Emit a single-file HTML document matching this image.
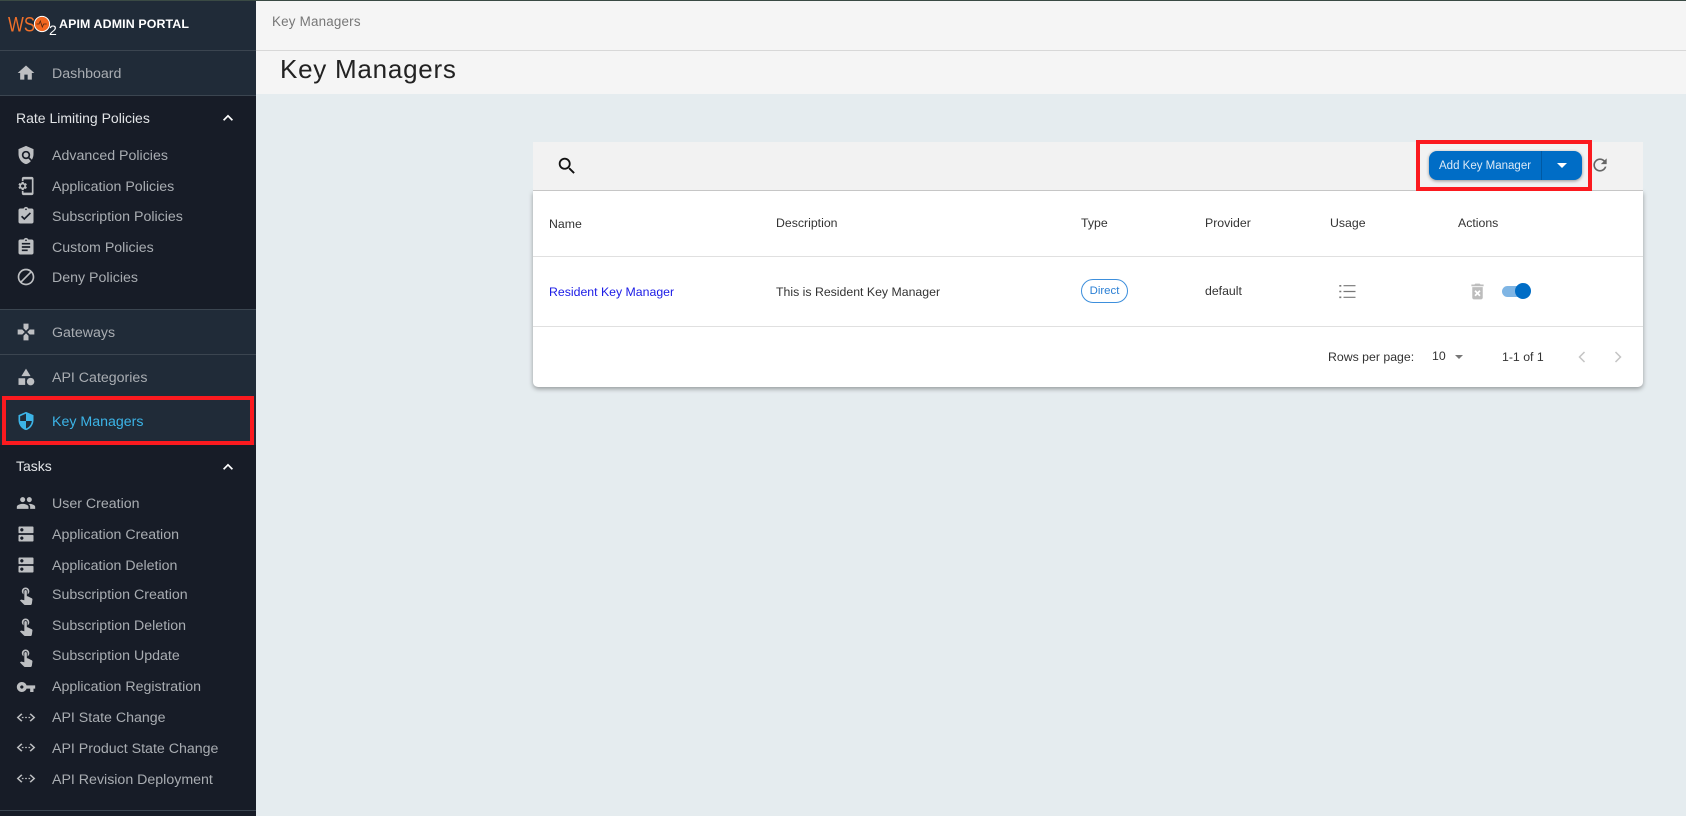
<!DOCTYPE html>
<html><head><meta charset="utf-8"><title>Key Managers</title>
<style>
html,body{margin:0;padding:0;width:1686px;height:816px;overflow:hidden;background:#e5ecef;font-family:"Liberation Sans",sans-serif;}
.a{position:absolute;}
.t{position:absolute;white-space:nowrap;line-height:20px;height:20px;}
.s{position:absolute;left:52px;white-space:nowrap;line-height:20px;height:20px;font-size:14.2px;color:#a9adb2;}
.h{position:absolute;left:16px;white-space:nowrap;line-height:20px;height:20px;font-size:14px;color:#e2e4e7;}
svg.i{position:absolute;left:16px;width:20px;height:20px;fill:#bdbfc2;}
svg.e{position:absolute;left:16px;width:20px;height:15px;fill:#bdbfc2;}
.c{position:absolute;white-space:nowrap;line-height:20px;height:20px;font-size:12.3px;color:#333;}
</style></head><body>
<div class="a" style="left:0;top:0;width:1686px;height:1px;background:#3a4a44"></div>
<div class="a" style="left:0;top:1px;width:256px;height:815px;background:#171c27"></div>
<div class="a" style="left:0;top:1px;width:256px;height:95px;background:#202b38"></div>
<div class="a" style="left:0;top:50px;width:256px;height:1px;background:#3b4550"></div>
<div class="a" style="left:0;top:95px;width:256px;height:1px;background:#3b4550"></div>
<div class="a" style="left:0;top:309px;width:256px;height:88px;background:#202b38"></div>
<div class="a" style="left:0;top:309px;width:256px;height:1px;background:#3b4550"></div>
<div class="a" style="left:0;top:354px;width:256px;height:1px;background:#3b4550"></div>
<div class="a" style="left:0;top:397px;width:256px;height:48px;background:#202b38"></div>
<div class="a" style="left:0;top:810px;width:256px;height:1px;background:#3b4550"></div>

<svg class="a" style="left:6px;top:8px" width="56" height="32" viewBox="0 0 56 32">
<text x="2" y="23.5" font-family="Liberation Sans" font-size="21" fill="#f0702a" textLength="27" lengthAdjust="spacingAndGlyphs">WS</text>
<circle cx="36" cy="16" r="7.6" fill="#f2661f" stroke="#fff" stroke-width="1"/>
<path d="M30.5 16h2.5l1.3-3 2 6 1.4-3h3" fill="none" stroke="#4a2512" stroke-width=".8"/>
<text x="43" y="27" font-family="Liberation Sans" font-size="14" fill="#fff">2</text>
</svg>
<div class="t" style="left:59px;top:14px;font-size:12.4px;font-weight:bold;color:#fff;letter-spacing:.12px">APIM ADMIN PORTAL</div>

<svg class="i" style="top:63px" viewBox="0 0 24 24"><path d="M10 20v-6h4v6h5v-8h3L12 3 2 12h3v8z"/></svg>
<div class="s" style="top:64px">Dashboard</div>

<div class="h" style="top:108px">Rate Limiting Policies</div>
<svg class="a" style="left:218px;top:108px;fill:#fff" width="20" height="20" viewBox="0 0 24 24"><path d="M7.41 15.41L12 10.83l4.59 4.58L18 14l-6-6-6 6z"/></svg>

<svg class="i" style="top:145px" viewBox="0 0 24 24"><path d="M21 5l-9-4-9 4v6c0 5.55 3.84 10.74 9 12 2.3-.56 4.33-1.9 5.88-3.71l-3.12-3.12c-1.94 1.29-4.58 1.07-6.29-.64-1.95-1.95-1.95-5.12 0-7.07 1.95-1.95 5.12-1.95 7.07 0 1.71 1.71 1.92 4.35.64 6.29l2.9 2.9C20.29 15.69 21 13.38 21 11V5z"/><circle cx="12" cy="12" r="3"/></svg>
<div class="s" style="top:146px">Advanced Policies</div>
<svg class="i" style="top:176px" viewBox="0 0 24 24"><path d="M11.8 12.5v-1l1.1-.8c.1-.1.1-.2.1-.3l-1-1.7c-.1-.1-.2-.2-.3-.1l-1.3.4c-.3-.2-.6-.4-.9-.5l-.2-1.3c0-.1-.1-.2-.3-.2H7c-.1 0-.2.1-.3.2l-.2 1.3c-.3.1-.6.3-.9.5l-1.3-.5c-.1 0-.2 0-.3.1l-1 1.7c-.1.1 0 .2.1.3l1.1.8v1l-1.1.8c-.1.2-.1.3-.1.4l1 1.7c.1.1.2.2.3.1l1.4-.4c.3.2.6.4.9.5l.2 1.3c-.1.1.1.2.2.2h2c.1 0 .2-.1.3-.2l.2-1.3c.3-.1.6-.3.9-.5l1.3.5c.1 0 .2 0 .3-.1l1-1.7c.1-.1 0-.2-.1-.3l-1.1-.9zM8 14c-1.1 0-2-.9-2-2s.9-2 2-2 2 .9 2 2-.9 2-2 2zM19 1H9c-1.1 0-2 .9-2 2v3h2V4h10v16H9v-2H7v3c0 1.1.9 2 2 2h10c1.1 0 2-.9 2-2V3c0-1.1-.9-2-2-2z"/></svg>
<div class="s" style="top:177px">Application Policies</div>
<svg class="i" style="top:206px" viewBox="0 0 24 24"><path d="M19 3h-4.18C14.4 1.84 13.3 1 12 1c-1.3 0-2.4.84-2.82 2H5c-1.1 0-2 .9-2 2v14c0 1.1.9 2 2 2h14c1.1 0 2-.9 2-2V5c0-1.1-.9-2-2-2zm-7 0c.55 0 1 .45 1 1s-.45 1-1 1-1-.45-1-1 .45-1 1-1zm-2 14l-4-4 1.41-1.41L10 14.17l6.59-6.59L18 9l-8 8z"/></svg>
<div class="s" style="top:207px">Subscription Policies</div>
<svg class="i" style="top:237px" viewBox="0 0 24 24"><path d="M19 3h-4.18C14.4 1.84 13.3 1 12 1c-1.3 0-2.4.84-2.82 2H5c-1.1 0-2 .9-2 2v14c0 1.1.9 2 2 2h14c1.1 0 2-.9 2-2V5c0-1.1-.9-2-2-2zm-7 0c.55 0 1 .45 1 1s-.45 1-1 1-1-.45-1-1 .45-1 1-1zm2 14H7v-2h7v2zm3-4H7v-2h10v2zm0-4H7V7h10v2z"/></svg>
<div class="s" style="top:238px">Custom Policies</div>
<svg class="i" style="top:267px" viewBox="0 0 24 24"><path d="M12 2C6.48 2 2 6.48 2 12s4.48 10 10 10 10-4.48 10-10S17.52 2 12 2zM4 12c0-4.42 3.58-8 8-8 1.85 0 3.55.63 4.9 1.69L5.69 16.9C4.63 15.55 4 13.85 4 12zm8 8c-1.85 0-3.55-.63-4.9-1.69L18.31 7.1C19.37 8.45 20 10.15 20 12c0 4.42-3.58 8-8 8z"/></svg>
<div class="s" style="top:268px">Deny Policies</div>

<svg class="i" style="top:322px" viewBox="0 0 24 24"><path d="M15 7.5V2H9v5.5l3 3 3-3zM7.5 9H2v6h5.5l3-3-3-3zM9 16.5V22h6v-5.5l-3-3-3 3zM16.5 9l-3 3 3 3H22V9h-5.5z"/></svg>
<div class="s" style="top:323px">Gateways</div>
<svg class="i" style="top:367px" viewBox="0 0 24 24"><path d="M12 2l-5.5 9h11z"/><circle cx="17.5" cy="17.5" r="4.5"/><path d="M3 13.5h8v8H3z"/></svg>
<div class="s" style="top:368px">API Categories</div>
<svg class="i" style="top:411px;fill:#3cb4e7" viewBox="0 0 24 24"><path d="M12 1L3 5v6c0 5.55 3.84 10.74 9 12 5.16-1.26 9-6.45 9-12V5l-9-4zm0 10.99h7c-.53 4.12-3.28 7.79-7 8.94V12H5V6.3l7-3.11v8.8z"/></svg>
<div class="s" style="top:412px;color:#3cb4e7">Key Managers</div>
<div class="a" style="left:2px;top:396px;width:252px;height:49px;border:4px solid #fb1a1f;box-sizing:border-box"></div>

<div class="h" style="top:456px">Tasks</div>
<svg class="a" style="left:218px;top:457px;fill:#fff" width="20" height="20" viewBox="0 0 24 24"><path d="M7.41 15.41L12 10.83l4.59 4.58L18 14l-6-6-6 6z"/></svg>

<svg class="i" style="top:493px" viewBox="0 0 24 24"><path d="M16 11c1.66 0 2.99-1.34 2.99-3S17.66 5 16 5c-1.66 0-3 1.34-3 3s1.34 3 3 3zm-8 0c1.66 0 2.99-1.34 2.99-3S9.66 5 8 5C6.34 5 5 6.34 5 8s1.34 3 3 3zm0 2c-2.33 0-7 1.17-7 3.5V19h14v-2.5c0-2.33-4.67-3.5-7-3.5zm8 0c-.29 0-.62.02-.97.05 1.16.84 1.97 1.97 1.97 3.45V19h6v-2.5c0-2.33-4.67-3.5-7-3.5z"/></svg>
<div class="s" style="top:494px">User Creation</div>
<svg class="i" style="top:524px" viewBox="0 0 24 24"><path d="M20 13H4c-.55 0-1 .45-1 1v6c0 .55.45 1 1 1h16c.55 0 1-.45 1-1v-6c0-.55-.45-1-1-1zM7 19c-1.1 0-2-.9-2-2s.9-2 2-2 2 .9 2 2-.9 2-2 2zM20 3H4c-.55 0-1 .45-1 1v6c0 .55.45 1 1 1h16c.55 0 1-.45 1-1V4c0-.55-.45-1-1-1zM7 9c-1.1 0-2-.9-2-2s.9-2 2-2 2 .9 2 2-.9 2-2 2z"/></svg>
<div class="s" style="top:525px">Application Creation</div>
<svg class="i" style="top:555px" viewBox="0 0 24 24"><path d="M20 13H4c-.55 0-1 .45-1 1v6c0 .55.45 1 1 1h16c.55 0 1-.45 1-1v-6c0-.55-.45-1-1-1zM7 19c-1.1 0-2-.9-2-2s.9-2 2-2 2 .9 2 2-.9 2-2 2zM20 3H4c-.55 0-1 .45-1 1v6c0 .55.45 1 1 1h16c.55 0 1-.45 1-1V4c0-.55-.45-1-1-1zM7 9c-1.1 0-2-.9-2-2s.9-2 2-2 2 .9 2 2-.9 2-2 2z"/></svg>
<div class="s" style="top:556px">Application Deletion</div>
<svg class="i" style="top:585px" viewBox="0 0 24 24"><path d="M9 11.24V7.5C9 6.12 10.12 5 11.5 5S14 6.12 14 7.5v3.74c1.21-.81 2-2.18 2-3.74C16 5.01 13.99 3 11.5 3S7 5.01 7 7.5c0 1.56.79 2.93 2 3.74zm9.84 4.63l-4.54-2.26c-.17-.07-.35-.11-.54-.11H13v-6c0-.83-.67-1.5-1.5-1.5S10 6.67 10 7.5v10.74l-3.43-.72c-.08-.01-.15-.03-.24-.03-.31 0-.59.13-.79.33l-.79.8 4.94 4.94c.27.27.65.44 1.06.44h6.79c.75 0 1.33-.55 1.44-1.28l.75-5.27c.01-.07.02-.14.02-.2 0-.62-.38-1.16-.91-1.38z"/></svg>
<div class="s" style="top:585px">Subscription Creation</div>
<svg class="i" style="top:616px" viewBox="0 0 24 24"><path d="M9 11.24V7.5C9 6.12 10.12 5 11.5 5S14 6.12 14 7.5v3.74c1.21-.81 2-2.18 2-3.74C16 5.01 13.99 3 11.5 3S7 5.01 7 7.5c0 1.56.79 2.93 2 3.74zm9.84 4.63l-4.54-2.26c-.17-.07-.35-.11-.54-.11H13v-6c0-.83-.67-1.5-1.5-1.5S10 6.67 10 7.5v10.74l-3.43-.72c-.08-.01-.15-.03-.24-.03-.31 0-.59.13-.79.33l-.79.8 4.94 4.94c.27.27.65.44 1.06.44h6.79c.75 0 1.33-.55 1.44-1.28l.75-5.27c.01-.07.02-.14.02-.2 0-.62-.38-1.16-.91-1.38z"/></svg>
<div class="s" style="top:616px">Subscription Deletion</div>
<svg class="i" style="top:647px" viewBox="0 0 24 24"><path d="M9 11.24V7.5C9 6.12 10.12 5 11.5 5S14 6.12 14 7.5v3.74c1.21-.81 2-2.18 2-3.74C16 5.01 13.99 3 11.5 3S7 5.01 7 7.5c0 1.56.79 2.93 2 3.74zm9.84 4.63l-4.54-2.26c-.17-.07-.35-.11-.54-.11H13v-6c0-.83-.67-1.5-1.5-1.5S10 6.67 10 7.5v10.74l-3.43-.72c-.08-.01-.15-.03-.24-.03-.31 0-.59.13-.79.33l-.79.8 4.94 4.94c.27.27.65.44 1.06.44h6.79c.75 0 1.33-.55 1.44-1.28l.75-5.27c.01-.07.02-.14.02-.2 0-.62-.38-1.16-.91-1.38z"/></svg>
<div class="s" style="top:646px">Subscription Update</div>
<svg class="i" style="top:677px" viewBox="0 0 24 24"><path d="M12.65 10C11.83 7.67 9.61 6 7 6c-3.31 0-6 2.69-6 6s2.69 6 6 6c2.61 0 4.83-1.67 5.65-4H17v4h4v-4h2v-4H12.65zM7 14c-1.1 0-2-.9-2-2s.9-2 2-2 2 .9 2 2-.9 2-2 2z"/></svg>
<div class="s" style="top:677px">Application Registration</div>
<svg class="e" style="top:710px" viewBox="0 0 24 24" preserveAspectRatio="none"><path d="M7.77 6.76L6.23 5.48.82 12l5.41 6.52 1.54-1.28L3.42 12l4.35-5.24zM7 13h2v-2H7v2zm10-2h-2v2h2v-2zm-6 2h2v-2h-2v2zm6.77-7.52l-1.54 1.28L20.58 12l-4.35 5.24 1.54 1.28L23.18 12l-5.41-6.52z"/></svg>
<div class="s" style="top:708px">API State Change</div>
<svg class="e" style="top:740px" viewBox="0 0 24 24" preserveAspectRatio="none"><path d="M7.77 6.76L6.23 5.48.82 12l5.41 6.52 1.54-1.28L3.42 12l4.35-5.24zM7 13h2v-2H7v2zm10-2h-2v2h2v-2zm-6 2h2v-2h-2v2zm6.77-7.52l-1.54 1.28L20.58 12l-4.35 5.24 1.54 1.28L23.18 12l-5.41-6.52z"/></svg>
<div class="s" style="top:739px">API Product State Change</div>
<svg class="e" style="top:771px" viewBox="0 0 24 24" preserveAspectRatio="none"><path d="M7.77 6.76L6.23 5.48.82 12l5.41 6.52 1.54-1.28L3.42 12l4.35-5.24zM7 13h2v-2H7v2zm10-2h-2v2h2v-2zm-6 2h2v-2h-2v2zm6.77-7.52l-1.54 1.28L20.58 12l-4.35 5.24 1.54 1.28L23.18 12l-5.41-6.52z"/></svg>
<div class="s" style="top:770px">API Revision Deployment</div>

<div class="a" style="left:256px;top:1px;width:1430px;height:93px;background:#f5f5f5"></div>
<div class="a" style="left:256px;top:50px;width:1430px;height:1px;background:#d8d8d8"></div>
<div class="t" style="left:272px;top:12px;font-size:13.4px;color:#777;letter-spacing:.2px">Key Managers</div>
<div class="t" style="left:280px;top:54px;height:30px;line-height:30px;font-size:26px;color:#222;letter-spacing:.75px">Key Managers</div>

<div class="a" style="left:533px;top:191px;width:1110px;height:196px;background:#fff;border-radius:0 0 5px 5px;box-shadow:0 2px 5px rgba(0,0,0,.35)"></div>
<div class="a" style="left:533px;top:142px;width:1110px;height:48px;background:#f2f2f2"></div>
<div class="a" style="left:533px;top:190px;width:1110px;height:1px;background:#c6c6c6"></div>
<div class="a" style="left:533px;top:256px;width:1110px;height:1px;background:#e0e0e0"></div>
<div class="a" style="left:533px;top:326px;width:1110px;height:1px;background:#e0e0e0"></div>

<svg class="a" style="left:556px;top:155px;fill:#111" width="22" height="22" viewBox="0 0 24 24"><path d="M15.5 14h-.79l-.28-.27C15.41 12.59 16 11.11 16 9.5 16 5.91 13.09 3 9.5 3S3 5.91 3 9.5 5.91 16 9.5 16c1.61 0 3.09-.59 4.23-1.57l.27.28v.79l5 4.99L20.49 19l-4.99-5zm-6 0C7.01 14 5 11.99 5 9.5S7.01 5 9.5 5 14 7.01 14 9.5 11.99 14 9.5 14z"/></svg>

<div class="a" style="left:1429px;top:151px;width:153px;height:29px;background:#006dc6;border-radius:8px;box-shadow:0 1px 3px rgba(0,0,0,.4)"></div>
<div class="a" style="left:1541px;top:151px;width:1px;height:29px;background:#0059a3"></div>
<div class="t" style="left:1439px;top:156px;font-size:11.5px;color:#dbe9f6">Add Key Manager</div>
<div class="a" style="left:1557px;top:163px;width:0;height:0;border-left:5px solid transparent;border-right:5px solid transparent;border-top:5px solid #fff"></div>
<div class="a" style="left:1416px;top:140px;width:176px;height:51px;border:4px solid #fb1a1f;box-sizing:border-box"></div>
<svg class="a" style="left:1590px;top:155px;fill:#666" width="20" height="20" viewBox="0 0 24 24"><path d="M17.65 6.35C16.2 4.9 14.21 4 12 4c-4.42 0-7.99 3.58-7.99 8s3.57 8 7.99 8c3.73 0 6.84-2.55 7.73-6h-2.08c-.82 2.33-3.04 4-5.65 4-3.31 0-6-2.69-6-6s2.69-6 6-6c1.66 0 3.14.69 4.22 1.78L13 11h7V4l-2.35 2.35z"/></svg>

<div class="c" style="left:549px;top:214px">Name</div>
<div class="c" style="left:776px;top:213px">Description</div>
<div class="c" style="left:1081px;top:213px">Type</div>
<div class="c" style="left:1205px;top:213px">Provider</div>
<div class="c" style="left:1330px;top:213px">Usage</div>
<div class="c" style="left:1458px;top:213px">Actions</div>

<div class="c" style="left:549px;top:282px;color:#1a1ae6">Resident Key Manager</div>
<div class="c" style="left:776px;top:282px">This is Resident Key Manager</div>
<div class="a" style="left:1081px;top:279px;width:47px;height:24px;border:1px solid #3d8fdc;border-radius:12px;box-sizing:border-box"></div>
<div class="t" style="left:1081px;top:281px;width:47px;text-align:center;font-size:11.4px;color:#2a7fd4">Direct</div>
<div class="c" style="left:1205px;top:281px">default</div>
<svg class="a" style="left:1339px;top:284px" width="17" height="15" viewBox="0 0 17 15"><path d="M4.5 1.7H16.5M4.5 7.5H16.5M4.5 13.3H16.5" stroke="#777" stroke-width="1.2" fill="none"/><path d="M0.3 1h2v1.6h-2zM0.3 6.7h2v1.6h-2zM0.3 12.5h2v1.6h-2z" fill="#777"/></svg>
<svg class="a" style="left:1467px;top:281px;fill:#bdbdbd" width="21" height="21" viewBox="0 0 24 24"><path d="M6 19c0 1.1.9 2 2 2h8c1.1 0 2-.9 2-2V7H6v12zm2.46-7.12l1.41-1.41L12 12.59l2.12-2.12 1.41 1.41L13.41 14l2.12 2.12-1.41 1.41L12 15.41l-2.12 2.12-1.41-1.41L10.59 14l-2.13-2.12zM15.5 4l-1-1h-5l-1 1H5v2h14V4z"/></svg>
<div class="a" style="left:1502px;top:286px;width:26px;height:11px;border-radius:5.5px;background:#7fb5e4"></div>
<div class="a" style="left:1515px;top:283px;width:16px;height:16px;border-radius:50%;background:#006dc6"></div>

<div class="c" style="left:1328px;top:347px">Rows per page:</div>
<div class="c" style="left:1432px;top:346px">10</div>
<div class="a" style="left:1455px;top:355px;width:0;height:0;border-left:4.5px solid transparent;border-right:4.5px solid transparent;border-top:4.5px solid #777"></div>
<div class="c" style="left:1502px;top:347px">1-1 of 1</div>
<svg class="a" style="left:1577px;top:350px" width="10" height="14" viewBox="0 0 10 14"><path d="M7.5 2L2.5 7l5 5" fill="none" stroke="#c4c4c4" stroke-width="1.5"/></svg>
<svg class="a" style="left:1613px;top:350px" width="10" height="14" viewBox="0 0 10 14"><path d="M2.5 2l5 5-5 5" fill="none" stroke="#c4c4c4" stroke-width="1.5"/></svg>
</body></html>
